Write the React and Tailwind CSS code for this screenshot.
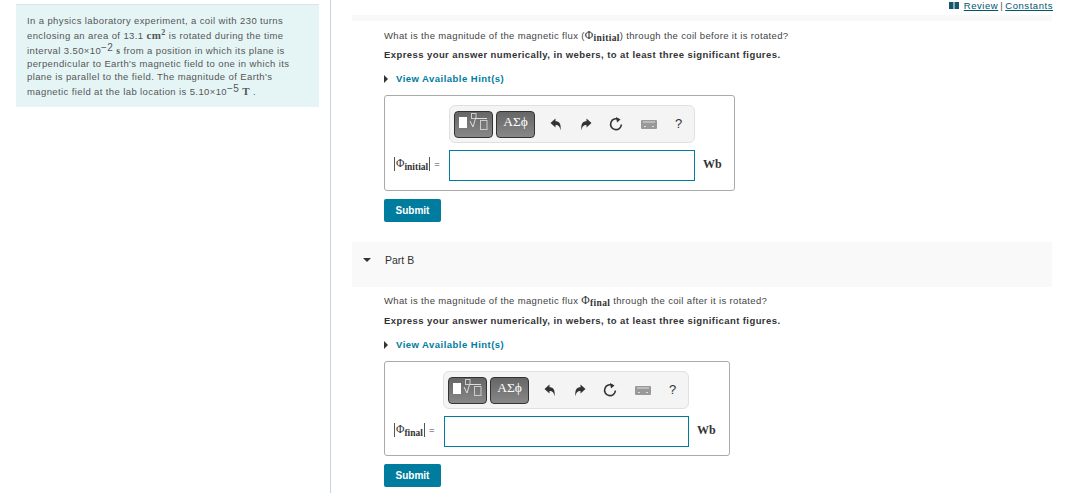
import { Fragment } from 'react';

const serif = { fontFamily: '"Liberation Serif", serif' };

const Undo = ({ flip }) => (
  <svg width="12" height="13" viewBox="0 0 12 13" className={flip ? '-scale-x-100' : ''}>
    <path d="M0.5 5 L5.5 0.5 V3.2 C9 3.2 11.5 5.5 10.5 12.5 C10 8.5 8.5 7 5.5 7 V9.6 Z" fill="#333" />
  </svg>
);

const Toolbar = () => (
  <div className="flex h-[38px] w-[246px] items-center rounded-md border border-[#e0e0e0] bg-[#f4f4f4] pl-[4px]">
    <div className="flex h-[27px] w-[39px] items-center rounded-[4px] border border-[#333] bg-gradient-to-b from-[#666] to-[#888]">
      <svg width="37" height="25" viewBox="0 0 37 25">
        <rect x="4" y="5" width="8" height="11" fill="#fff" />
        <rect x="16.5" y="1.5" width="4.5" height="5" fill="none" stroke="#ccc" />
        <path d="M15 9 L18 15 L20.5 6.5 H32" fill="none" stroke="#ddd" />
        <rect x="25.5" y="8.5" width="6.5" height="9" fill="none" stroke="#ccc" />
      </svg>
    </div>
    <div className="ml-[3px] flex h-[27px] w-[39px] justify-center rounded-[4px] border border-[#333] bg-gradient-to-b from-[#666] to-[#888] text-[13.5px] leading-[19px] text-white" style={serif}>
      ΑΣϕ
    </div>
    <div className="ml-[15px] flex w-[107px] items-center justify-between">
      <Undo />
      <Undo flip />
      <svg width="14" height="14" viewBox="0 0 14 14">
        <path d="M9.8 2.6 A5.4 5.4 0 1 0 12.4 7.5" fill="none" stroke="#333" strokeWidth="1.6" />
        <path d="M7 0 L11.5 2.6 L8 5.5 Z" fill="#333" />
      </svg>
      <svg width="16" height="9" viewBox="0 0 16 9">
        <rect width="16" height="9" rx="1" fill="#999" />
        <path d="M2 2 h12 M3 6.5 h2 M11 6.5 h2" stroke="#ddd" />
      </svg>
    </div>
    <span className="ml-[18px] text-[13px] text-[#333]">?</span>
  </div>
);

const Flux = ({ sub }) => (
  <span className="text-[11.5px] text-[#333]" style={serif}>
    Φ<sub className="text-[9.5px] font-bold">{sub}</sub>
  </span>
);

const AnswerBox = ({ sub, labelWidth, boxWidth, height, toolbarLeft, inputWidth }) => (
  <div className="rounded-[3px] border border-[#aaa] bg-white" style={{ width: boxWidth, height }}>
    <div className="pt-[9px]" style={{ paddingLeft: toolbarLeft }}>
      <Toolbar />
    </div>
    <div className="mt-[7px] flex items-center pl-[9px]">
      <div className="-mt-[3px] flex items-center whitespace-nowrap" style={{ width: labelWidth }}>
        <span className="mr-[1px] h-[14px] w-px bg-[#555]" />
        <Flux sub={sub} />
        <span className="ml-[1px] h-[14px] w-px bg-[#555]" />
        <span className="ml-[4px] text-[9.5px]">=</span>
      </div>
      <div className="h-[31px] border border-[#007c9e] bg-white" style={{ width: inputWidth }} />
      <span className="-mt-[3px] ml-[8px] text-[12px] font-bold text-[#333]" style={serif}>Wb</span>
    </div>
  </div>
);

const Question = ({ children, gap }) => (
  <Fragment>
    <p className="ml-[32px] text-[9.5px] leading-[14px] tracking-[0.35px] text-[#444]">{children}</p>
    <p className="ml-[32px] text-[9.5px] font-bold leading-[14px] tracking-[0.42px] text-[#333]" style={{ marginTop: gap }}>
      Express your answer numerically, in webers, to at least three significant figures.
    </p>
    <div className="ml-[32px] mt-[10px] flex items-center text-[9.5px] font-bold leading-[14px] tracking-[0.47px] text-[#007c9e]">
      <span className="mr-[8px] h-0 w-0 border-y-[4px] border-l-[4px] border-y-transparent border-l-[#333]" />
      View Available Hint(s)
    </div>
  </Fragment>
);

const Submit = () => (
  <button className="ml-[32px] block h-[23px] w-[57px] rounded-[2px] bg-[#007c9e] text-[10px] font-bold text-white">
    Submit
  </button>
);

export default function App() {
  return (
    <div className="flex h-[493px] w-[1071px] overflow-hidden bg-white text-[#444]" style={{ fontFamily: '"Liberation Sans", Arial, sans-serif' }}>
      <aside className="w-[331px] shrink-0 border-r border-[#c4d3e6] pl-[16px] pr-[11px] pt-[4px]">
        <div className="h-[103px] whitespace-nowrap border-t border-[#dde3e5] bg-[#e5f5f6] pl-[11px] pt-[9px] text-[9.5px] tracking-[0.39px] text-[#555]">
          <div className="h-[14px] leading-[14px]">In a physics laboratory experiment, a coil with 230 turns</div>
          <div className="h-[15px] leading-[15px]">
            enclosing an area of 13.1 <span className="text-[11px] font-bold" style={serif}>cm<sup className="text-[8px]">2</sup></span> is rotated during the time
          </div>
          <div className="h-[14px] leading-[15px]">
            interval 3.50×10<sup className="top-[-3px] text-[10px]">−2</sup> <span className="font-bold" style={serif}>s</span> from a position in which its plane is
          </div>
          <div className="h-[13px] leading-[13px]">perpendicular to Earth's magnetic field to one in which its</div>
          <div className="h-[13px] leading-[13px]">plane is parallel to the field. The magnitude of Earth's</div>
          <div className="h-[15px] leading-[17px]">
            magnetic field at the lab location is 5.10×10<sup className="top-[-3px] text-[10px]">−5</sup> <span className="text-[11px] font-bold" style={serif}>T</span> .
          </div>
        </div>
      </aside>

      <main className="w-[721px] pl-[21px]">
        <div className="relative h-[15px]">
          <div className="absolute right-[-1px] top-0 flex items-center whitespace-nowrap text-[9.5px] leading-[11px] tracking-[0.55px] text-[#00576e]">
            <svg width="10" height="7" viewBox="0 0 10 7" className="mr-[5px]">
              <path d="M0 0 H4.5 V7 H0 Z M5.5 0 H10 V7 H5.5 Z" fill="#15576f" />
            </svg>
            <span className="underline">Review</span>
            <span className="mx-[2px] text-[#555]">|</span>
            <span className="underline">Constants</span>
          </div>
        </div>
        <div className="h-[6px] w-[700px] bg-[#f9f9f9]" />

        <div className="pt-[7px]">
          <Question gap={5}>
            What is the magnitude of the magnetic flux (<Flux sub="initial" />) through the coil before it is rotated?
          </Question>
          <div className="ml-[32px] mt-[9px]">
            <AnswerBox sub="initial" labelWidth={55} boxWidth={351} height={96} toolbarLeft={64} inputWidth={246} />
          </div>
          <div className="mt-[8px]"><Submit /></div>
        </div>

        <div className="mt-[20px] h-[45px] w-[700px] bg-[#f9f9f9] pl-[11px] pt-[11px]">
          <div className="flex items-center">
            <span className="h-0 w-0 border-x-[4px] border-t-[4px] border-x-transparent border-t-[#333]" />
            <span className="ml-[14px] text-[10.5px] leading-[14px] text-[#333]">Part B</span>
          </div>
        </div>

        <div className="pt-[6px]">
          <Question gap={6}>
            What is the magnitude of the magnetic flux <Flux sub="final" /> through the coil after it is rotated?
          </Question>
          <div className="ml-[32px] mt-[9px]">
            <AnswerBox sub="final" labelWidth={50} boxWidth={346} height={95} toolbarLeft={58} inputWidth={245} />
          </div>
          <div className="mt-[8px]"><Submit /></div>
        </div>
      </main>
    </div>
  );
}
